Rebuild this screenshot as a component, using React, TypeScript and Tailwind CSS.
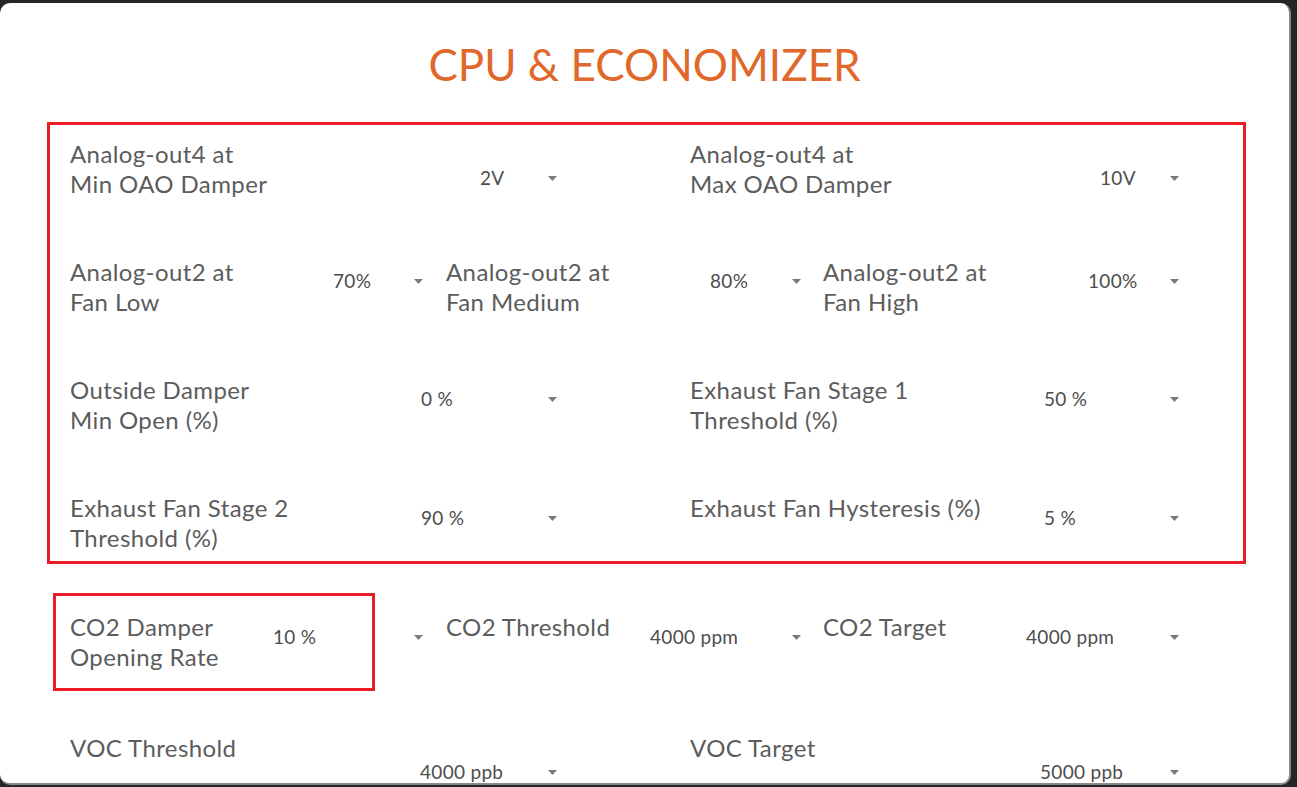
import React from "react";

type FieldProps = {
  lines: string[];
  value: string;
  labelW: string;
  valueW: string;
  valueTop: string;
};

function Arrow() {
  return (
    <svg width="9" height="5" viewBox="0 0 9 5" className="block">
      <path d="M0 0 L9 0 L4.5 5 Z" fill="#7a7a7a" />
    </svg>
  );
}

function Field({ lines, value, labelW, valueW, valueTop }: FieldProps) {
  return (
    <div className="flex items-start">
      <div className={`${labelW} shrink-0 text-[24px] leading-[30px] tracking-[0.4px] text-[#5c5c5c]`}>
        {lines.map((l, i) => (
          <div key={i} className="whitespace-nowrap">
            {l}
          </div>
        ))}
      </div>
      <div className={`${valueW} ${valueTop} shrink-0 text-[19px] leading-[20px] tracking-[0.3px] text-[#4d4d4d] whitespace-nowrap`}>
        {value}
      </div>
      <div className={`${valueTop} h-[20px] flex items-center`}>
        <Arrow />
      </div>
    </div>
  );
}

export default function App() {
  return (
    <div className="h-[787px] w-[1297px] overflow-hidden bg-[#262626] pt-[3px]" style={{ fontFamily: "Lato, 'Open Sans', sans-serif" }}>
      <div className="relative h-[782px] w-[1291px] overflow-hidden rounded-[10px] border-r-2 border-b-2 border-[#8a8a8a] bg-white">
        <div className="pt-[36px] text-center text-[44px] leading-[50px] text-[#e0682b]">
          CPU &amp; ECONOMIZER
        </div>

        <div className="mt-[50px] flex flex-col pl-[70px]">
          {/* Row 1 */}
          <div className="grid grid-cols-[620px_600px]">
            <Field lines={["Analog-out4 at", "Min OAO Damper"]} value="2V" labelW="w-[410px]" valueW="w-[68px]" valueTop="mt-[29px]" />
            <Field lines={["Analog-out4 at", "Max OAO Damper"]} value="10V" labelW="w-[410px]" valueW="w-[70px]" valueTop="mt-[29px]" />
          </div>
          {/* Row 2 */}
          <div className="mt-[58px] grid grid-cols-[376px_377px_400px]">
            <Field lines={["Analog-out2 at", "Fan Low"]} value="70%" labelW="w-[263px]" valueW="w-[81px]" valueTop="mt-[14px]" />
            <Field lines={["Analog-out2 at", "Fan Medium"]} value="80%" labelW="w-[264px]" valueW="w-[82px]" valueTop="mt-[14px]" />
            <Field lines={["Analog-out2 at", "Fan High"]} value="100%" labelW="w-[265px]" valueW="w-[82px]" valueTop="mt-[14px]" />
          </div>
          {/* Row 3 */}
          <div className="mt-[58px] grid grid-cols-[620px_600px]">
            <Field lines={["Outside Damper", "Min Open (%)"]} value="0 %" labelW="w-[351px]" valueW="w-[127px]" valueTop="mt-[14px]" />
            <Field lines={["Exhaust Fan Stage 1", "Threshold (%)"]} value="50 %" labelW="w-[354px]" valueW="w-[126px]" valueTop="mt-[14px]" />
          </div>
          {/* Row 4 */}
          <div className="mt-[58px] grid grid-cols-[620px_600px]">
            <Field lines={["Exhaust Fan Stage 2", "Threshold (%)"]} value="90 %" labelW="w-[351px]" valueW="w-[127px]" valueTop="mt-[15px]" />
            <Field lines={["Exhaust Fan Hysteresis (%)"]} value="5 %" labelW="w-[354px]" valueW="w-[126px]" valueTop="mt-[15px]" />
          </div>
          {/* Row 5 */}
          <div className="mt-[59px] grid grid-cols-[376px_377px_400px]">
            <Field lines={["CO2 Damper", "Opening Rate"]} value="10 %" labelW="w-[203px]" valueW="w-[141px]" valueTop="mt-[15px]" />
            <Field lines={["CO2 Threshold"]} value="4000 ppm" labelW="w-[204px]" valueW="w-[142px]" valueTop="mt-[15px]" />
            <Field lines={["CO2 Target"]} value="4000 ppm" labelW="w-[203px]" valueW="w-[144px]" valueTop="mt-[15px]" />
          </div>
          {/* Row 6 */}
          <div className="mt-[61px] grid grid-cols-[620px_600px]">
            <Field lines={["VOC Threshold"]} value="4000 ppb" labelW="w-[350px]" valueW="w-[128px]" valueTop="mt-[29px]" />
            <Field lines={["VOC Target"]} value="5000 ppb" labelW="w-[350px]" valueW="w-[130px]" valueTop="mt-[29px]" />
          </div>
        </div>

        {/* highlight annotations */}
        <div className="pointer-events-none absolute left-[47px] top-[119px] h-[442px] w-[1199px] border-[3px] border-[#ec1c24]" />
        <div className="pointer-events-none absolute left-[53px] top-[590px] h-[98px] w-[322px] border-[3px] border-[#ec1c24]" />
      </div>
    </div>
  );
}
